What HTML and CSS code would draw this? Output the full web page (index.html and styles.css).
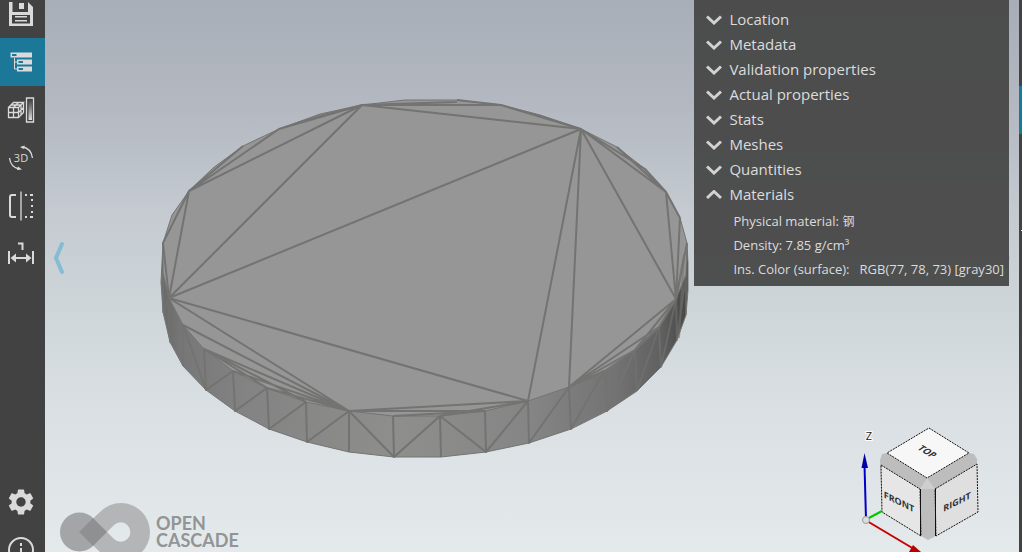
FILE: index.html
```html
<!DOCTYPE html>
<html lang="en">
<head>
<meta charset="utf-8">
<title>CAD viewer</title>
<link rel="stylesheet" href="styles.css">
</head>
<body>
<div class="app">
  <nav class="sidebar" aria-label="Tools">
    <button class="tool" aria-label="Save"><svg viewBox="0 0 45 48"><path class="fill" fill-rule="evenodd" d="M9 12H28L33 17V36H9ZM12.500 12V22H28V12ZM12 25V33.500H30V25Z"/><path class="fill" d="M19 13h5v6h-5zM15 26h12v1.500h-12zM15 30h12v1.500h-12z"/></svg></button>
    <button class="tool active" aria-label="Structure"><svg viewBox="0 0 45 48"><path class="fill" fill-rule="evenodd" d="M10.500 14.500H32V19.500H10.500ZM12 16V18H16.500V16ZM17 21.500H32V26.500H17ZM18.500 23V25H23V23ZM17 28.500H32V33.500H17ZM18.500 30V32H23V30Z"/><path class="line thin" d="M14.500 20V31H17M14.500 24H17"/></svg></button>
    <button class="tool" aria-label="Display mode"><svg viewBox="0 0 45 48"><defs><linearGradient id="bar" x2="0" y2="1"><stop stop-color="#444"/><stop offset="1" stop-color="#ddd"/></linearGradient></defs><path class="line" d="M8.500 21.500H18.500V31.500H8.500ZM8.500 21.500L13.500 16.500H23.500L18.500 21.500M23.500 16.500V26.500L18.500 31.500M13.500 21.500V31.500M8.500 26.500H18.500L23.500 21.500M13.500 21.500L18.500 16.500M11 19H21V29"/><path class="line" d="M26.500 12H33.500V36H26.500Z"/><path fill="url(#bar)" d="M28.500 14h3.500v20h-3.500z"/></svg></button>
    <button class="tool" aria-label="3D rotation"><svg viewBox="0 0 45 48"><text class="label3d" x="21" y="28">3D</text><path class="line" d="M22 13Q31 14 32.500 24M9.500 24Q10.500 33 19 35"/><path class="fill" d="M20 13L25 11.500L23.500 15ZM22 35.500L18 32.500L17 36Z"/></svg></button>
    <button class="tool" aria-label="Clipping"><svg viewBox="0 0 45 48"><path class="line thick" d="M16 13H12Q10 13 10 15V33Q10 35 12 35H16"/><path class="line" d="M21 9.500V38.500"/><path class="fill" d="M25 12h2v2h-2zM30 12h3v2h-3zM31 17h2v2h-2zM31 23h2v2h-2zM31 29h2v2h-2zM30 34h3v2h-3zM25 34h2v2h-2z"/></svg></button>
    <button class="tool" aria-label="Measure"><svg viewBox="0 0 45 48"><path class="line thick" d="M9 21V34M33 21V34M12 28H30M18 13.500H22.500V20"/><path class="fill" d="M10.500 28L16 23.500V32.500ZM31.500 28L26 23.500V32.500Z"/></svg></button>
    <button class="tool settings" aria-label="Settings"><svg viewBox="0 0 45 48"><path class="fill" transform="translate(5.400 8.400) scale(1.300)" d="M19.140 12.940c.04-.3.060-.610.060-.940s-.020-.640-.070-.940l2.030-1.580c.180-.140.230-.410.120-.610l-1.920-3.320c-.120-.220-.370-.290-.590-.220l-2.390.960c-.5-.380-1.030-.7-1.620-.940L14.400 2.810c-.040-.240-.240-.410-.480-.410h-3.840c-.240 0-.430.170-.470.410L9.250 5.350c-.590.240-1.130.570-1.620.940l-2.390-.960c-.220-.080-.470 0-.590.220L2.740 8.870c-.120.210-.080.470.120.610l2.030 1.580c-.050.300-.090.630-.090.940s.020.640.070.940l-2.030 1.580c-.180.140-.230.410-.120.610l1.920 3.320c.120.220.370.290.590.220l2.390-.960c.5.380 1.030.7 1.620.940l.360 2.540c.050.240.240.410.480.410h3.840c.240 0 .440-.170.470-.410l.360-2.540c.590-.240 1.130-.560 1.620-.940l2.390.960c.220.080.470 0 .590-.220l1.920-3.320c.120-.220.070-.470-.120-.610l-2.010-1.580zM12 15.600c-1.980 0-3.600-1.620-3.600-3.600s1.620-3.600 3.600-3.600 3.600 1.620 3.600 3.600-1.620 3.600-3.600 3.600z"/></svg></button>
    <button class="tool" aria-label="About"><svg viewBox="0 0 45 48"><circle class="line thick" cx="21" cy="24" r="12"/><path class="fill" d="M20 17h2v3h-2zM20 22h2v9h-2z"/></svg></button>
  </nav>

  <main class="stage">
    <svg class="model" viewBox="45 0 974 552" role="img" aria-label="Disc mesh">
      <defs><linearGradient id="rim"><stop stop-color="#686868"/><stop offset=".04" stop-color="#777"/><stop offset=".16" stop-color="#838383"/><stop offset=".45" stop-color="#8e8e8d"/><stop offset=".7" stop-color="#858585"/><stop offset=".86" stop-color="#737373"/><stop offset=".95" stop-color="#606060"/><stop offset="1" stop-color="#454545"/></linearGradient></defs>
      <path fill="url(#rim)" stroke="#747473" d="M163 243L161 282L163 312L170 342L183 366L206 390L235 411L269 429L307 442L349 452L394 457L441 457L486 452L529 443L571 429L607 411L637 391L661 367L677 340L686 315L688 290V263L687 243Z"/>
      <path fill="#969696" stroke="#747473" d="M189 191L213 168L243 146L279 129L320 114L362 105L405 100H457L501 105L540 115L581 129L617 147L645 169L666 192L680 218L687 243L686 275L676 299L659 327L635 350L604 371L569 387L528 401L485 411L440 416H393L349 411L306 402L267 388L233 371L204 349L183 325L169 298L163 273V243L172 215Z"/>
      <path class="mesh" d="M362 105L169 298L581 129L362 105H501L457 100M362 105L457 102M169 298L189 191L362 105L279 129L189 191L243 146M279 129L320 116L362 105M189 191L163 243L169 298M501 105L581 129L540 116L501 105M581 129L528 401L169 298L349 411L528 401M581 129L569 387L676 299L581 129L666 192L676 299M581 129L645 169L666 192L617 147M680 218L676 299L687 243M666 192L680 218M183 325L349 411L204 349L306 402M204 349L267 388L349 411M233 371L349 411M349 411L485 411L393 416M440 416L528 401M569 387L635 350L676 299M569 387L604 371M569 387L659 327M635 350L659 327L676 299"/>
      <path class="mesh" d="M183 325L206 390M204 349L206 390L233 371L235 411L267 388L269 429L306 402L307 442L349 411V452M349 411L394 457L393 416M394 457L440 416L441 457M440 416L486 452L485 411M486 452L528 401L529 443L569 387L571 429L604 371L607 411L635 350M607 411V371"/>
      <path class="mesh faint" d="M169 298L170 342L183 325V366M163 273L163 312L169 298M637 391L659 327L661 367L676 299L677 340L686 275V315M635 350L637 391M676 299L684 255L679 338"/>
    </svg>

    <button class="pager previous" aria-label="Show left panel"><svg viewBox="0 0 12 34"><path d="M9 3L3 17L9 31"/></svg></button>
    <button class="pager next" aria-label="Show right panel"><svg viewBox="0 0 12 34"><path d="M3 3L9 17L3 31"/></svg></button>

    <section class="panel" aria-label="Properties">
      <button class="group"><svg class="chevron" viewBox="0 0 16 10"><path d="M1 1.500L8 8L15 1.500"/></svg>Location</button>
      <button class="group"><svg class="chevron" viewBox="0 0 16 10"><path d="M1 1.500L8 8L15 1.500"/></svg>Metadata</button>
      <button class="group"><svg class="chevron" viewBox="0 0 16 10"><path d="M1 1.500L8 8L15 1.500"/></svg>Validation properties</button>
      <button class="group"><svg class="chevron" viewBox="0 0 16 10"><path d="M1 1.500L8 8L15 1.500"/></svg>Actual properties</button>
      <button class="group"><svg class="chevron" viewBox="0 0 16 10"><path d="M1 1.500L8 8L15 1.500"/></svg>Stats</button>
      <button class="group"><svg class="chevron" viewBox="0 0 16 10"><path d="M1 1.500L8 8L15 1.500"/></svg>Meshes</button>
      <button class="group"><svg class="chevron" viewBox="0 0 16 10"><path d="M1 1.500L8 8L15 1.500"/></svg>Quantities</button>
      <button class="group" aria-expanded="true"><svg class="chevron" viewBox="0 0 16 10"><path d="M1 8L8 1.500L15 8"/></svg>Materials</button>
      <div class="values">
        <div class="value">Physical material: <span class="cjk" lang="zh">钢</span></div>
        <div class="value">Density: 7.85 g/cm³</div>
        <div class="value pair"><span>Ins. Color (surface):</span><span>RGB(77, 78, 73) [gray30]</span></div>
      </div>
    </section>

    <div class="brand">
      <svg viewBox="59 502 92 60" aria-hidden="true"><circle cx="79.500" cy="532" r="19.500" fill="#a3a5a6"/><path fill="#b3b5b6" fill-rule="evenodd" d="M79 532L100.500 511.500A29 29 0 1 1 100.500 552.500ZM107 532L114 539A9.700 9.700 0 1 0 114 525Z"/><path fill="#8e9091" d="M79 532L93 518L107 532L93 546Z"/></svg>
      <div class="brand-name"><div>OPEN</div><div>CASCADE</div></div>
    </div>

    <svg class="cube" viewBox="859 422 124 130" role="img" aria-label="View cube">
      <path fill="#bdbdbd" d="M929 428L969 453L974 454L977 459V512L936 536L928 540L921 536L882 512L880 460L882 454L887 453Z"/>
      <path fill="#cecece" d="M927 478L920 489H935Z"/>
      <g stroke="#111" stroke-dasharray="2 1"><path fill="#f7f7f7" d="M929 428L969 453L927 478L887 453Z"/><path fill="#e6e6e6" d="M881 465L920 489L921 536L882 512Z"/><path fill="#dfdfdf" d="M935 489L977 464L978 512L936 536Z"/></g>
      <path fill="none" stroke="#111" d="M920.500 489V536M935.500 489V536"/>
      <text class="face" transform="translate(928 451) rotate(32) skewX(-24)" y="4">TOP</text>
      <text class="face" transform="translate(899 501) skewY(26)" y="4">FRONT</text>
      <text class="face" transform="translate(957 501) skewY(-27)" y="4">RIGHT</text>
      <path fill="none" stroke="#0000c8" stroke-width="2" d="M866 519L864.500 465"/><path fill="#0000a8" d="M864.500 453L868 468H861.500Z"/>
      <path stroke="#00c800" stroke-width="2" d="M867 519L882 511"/>
      <path stroke="#c80000" stroke-width="2" d="M867 521L914 549"/><path fill="#b80000" d="M913 545L921 552H909Z"/>
      <circle cx="866" cy="520" r="3.500" fill="#ddd" stroke="#999"/>
      <text class="axis" x="869" y="440">Z</text>
    </svg>
  </main>

  <aside class="edge"><div class="edge-active"></div><div class="edge-mark"></div></aside>
</div>
</body>
</html>
```
FILE: styles.css
```css
* { box-sizing: border-box; }
body { margin: 0; font-family: "Open Sans", "Noto Sans CJK SC", sans-serif; }
button { padding: 0; border: 0; background: none; color: inherit; font: inherit; cursor: pointer; }
svg { display: block; }

.app { display: grid; grid-template-columns: 45px 1fr 3px; height: 100vh; overflow: hidden; }

.sidebar { display: flex; flex-direction: column; min-height: 0; margin: -10px 0 -22px; background: #424242; }
.tool { flex: none; height: 48px; width: 100%; }
.tool svg { width: 45px; height: 48px; }
.active { background: #1b7899; }
.settings { margin-top: auto; }
.fill { fill: #dadada; }
.line { fill: none; stroke: #dadada; stroke-width: 1.3; }
.thin { stroke-width: 1; }
.thick { stroke-width: 2; }
.label3d { fill: #dadada; font-size: 11px; text-anchor: middle; }

.stage { position: relative; min-width: 0; overflow: hidden; background: linear-gradient(#a8aeb7, #b3b8c1 19%, #c4cad0 38%, #ced5d9 55%, #d9dfe2 73%, #e4eaec); }
.model { width: 100%; height: 100%; }
.mesh { fill: none; stroke: #737372; stroke-width: 2; stroke-linejoin: round; }
.faint { opacity: .6; }

.pager { position: absolute; top: 241px; width: 12px; height: 34px; }
.pager path { fill: none; stroke: #84bdd2; stroke-width: 4; stroke-linecap: round; }
.previous { left: 8px; }
.next { right: 8px; opacity: .5; }

.panel { position: absolute; top: 0; right: 10px; padding: 7px 5px 5px 12px; background: rgba(70, 70, 70, .94); color: #dcdcdc; }
.group { display: flex; align-items: center; gap: 7px; width: 100%; height: 25px; font-size: 15px; line-height: 25px; text-align: left; }
.chevron { width: 16px; height: 10px; fill: none; stroke: #d2d2d2; stroke-width: 3; }
.values { padding: 2px 0 0 27px; font-size: 13px; line-height: 24px; white-space: nowrap; }
.pair { display: flex; gap: 10px; }
.cjk { font-size: 12px; line-height: 12px; }

.brand { position: absolute; left: 14px; bottom: -10px; display: flex; align-items: center; gap: 5px; color: #929495; font: bold 18px/17px Lato, sans-serif; }
.brand svg { width: 92px; height: 60px; }

.cube { position: absolute; right: 36px; bottom: 0; width: 124px; height: 130px; }
.face { fill: #333; font: bold 9px "Open Sans", sans-serif; text-anchor: middle; }
.axis { fill: #222; stroke: #fff; stroke-width: 2; paint-order: stroke; font: 11px "Open Sans", sans-serif; text-anchor: middle; }

.edge { padding-top: 86px; background: #424242; }
.edge-active { height: 48px; background: #1b7899; }
.edge-mark { width: 1px; height: 1px; margin: 96px 0 0 auto; background: #eee; }
```
